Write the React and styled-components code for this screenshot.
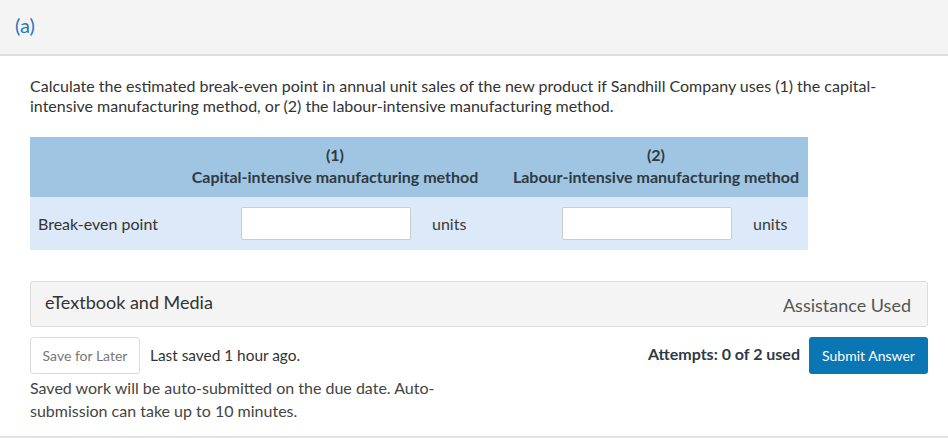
import React from "react";
import styled, { createGlobalStyle } from "styled-components";

const Global = createGlobalStyle`
  html, body { margin: 0; padding: 0; background: #fff; }
  body { font-family: Lato, "Open Sans", Arial, sans-serif; color: #333; }
  * { box-sizing: border-box; }
`;

const Page = styled.div`
  width: 948px;
  height: 438px;
  border-bottom: 2px solid #e2e2e2;
`;

const PartHeader = styled.div`
  height: 56px;
  background: #f4f4f4;
  border-bottom: 2px solid #dedede;
  padding: 13px 15px 0;
  font-size: 20px;
  color: #1f78c1;
`;

const Body = styled.div`
  padding: 20px 20px 0 30px;
`;

const Prompt = styled.p`
  margin: 0;
  font-size: 16px;
  line-height: 19.5px;
  color: #333;
  max-width: 880px;
`;

const Grid = styled.div`
  margin-top: 22px;
  width: 778px;
  display: grid;
  grid-template-columns: 155px 300px 19px 304px;
`;

const HeadCell = styled.div`
  background: #a0c5e2;
  height: 60px;
  padding-top: 7px;
  text-align: center;
  font-weight: 700;
  font-size: 16px;
  line-height: 22px;
  color: #2e3a44;
  white-space: nowrap;
`;

const RowCell = styled.div`
  background: #dce9f9;
  height: 53px;
  display: flex;
  align-items: center;
  gap: 21px;
  padding-left: ${(p) => p.$pad || 0}px;
  font-size: 16px;
  color: #333;
`;

const Input = styled.input`
  width: 170px;
  height: 33px;
  border: 1px solid #cccccc;
  border-radius: 2px;
  background: #fff;
  margin-top: -1px;
`;

const Units = styled.span`
  font-size: 16px;
  color: #3a3a3a;
`;

const MediaPanel = styled.div`
  margin-top: 31px;
  height: 46px;
  border: 1px solid #dcdcdc;
  border-radius: 3px;
  background: #f4f4f4;
  display: flex;
  align-items: center;
  justify-content: space-between;
  padding: 0 16px 0 14px;
`;

const MediaTitle = styled.span`
  font-size: 18px;
  color: #333;
  margin-top: -5px;
`;

const Assist = styled.span`
  font-size: 18px;
  color: #555;
  margin-top: 1px;
`;

const Footer = styled.div`
  margin-top: 10px;
  display: flex;
  justify-content: space-between;
  align-items: flex-start;
`;

const Left = styled.div`
  display: flex;
  flex-direction: column;
`;

const SaveRow = styled.div`
  display: flex;
  align-items: center;
  gap: 10px;
`;

const SaveButton = styled.button`
  width: 110px;
  height: 37px;
  border: 1px solid #dcdcdc;
  border-radius: 3px;
  background: #fff;
  font-family: inherit;
  font-size: 14px;
  color: #777;
  padding: 0;
`;

const Saved = styled.span`
  font-size: 15.4px;
  color: #333;
  margin-top: -2px;
`;

const Note = styled.p`
  margin: 3px 0 0;
  width: 420px;
  font-size: 16px;
  line-height: 22.5px;
  color: #444;
`;

const Right = styled.div`
  display: flex;
  align-items: center;
  gap: 9px;
`;

const Attempts = styled.span`
  font-size: 16px;
  font-weight: 700;
  color: #2e3a44;
  margin-top: -4px;
`;

const SubmitButton = styled.button`
  width: 119px;
  height: 37px;
  border: none;
  border-radius: 3px;
  background: #0a76b3;
  color: #fff;
  font-family: inherit;
  font-size: 14px;
  padding: 0;
`;

export default function App() {
  return (
    <>
      <Global />
      <Page>
        <PartHeader>(a)</PartHeader>
        <Body>
          <Prompt>
            Calculate the estimated break-even point in annual unit sales of the new product if Sandhill
            Company uses (1) the capital-intensive manufacturing method, or (2) the labour-intensive
            manufacturing method.
          </Prompt>
          <Grid>
            <HeadCell />
            <HeadCell>
              (1)
              <br />
              Capital-intensive manufacturing method
            </HeadCell>
            <HeadCell />
            <HeadCell>
              (2)
              <br />
              Labour-intensive manufacturing method
            </HeadCell>
            <RowCell $pad={8}>Break-even point</RowCell>
            <RowCell $pad={56}>
              <Input />
              <Units>units</Units>
            </RowCell>
            <RowCell />
            <RowCell $pad={58}>
              <Input />
              <Units>units</Units>
            </RowCell>
          </Grid>
          <MediaPanel>
            <MediaTitle>eTextbook and Media</MediaTitle>
            <Assist>Assistance Used</Assist>
          </MediaPanel>
          <Footer>
            <Left>
              <SaveRow>
                <SaveButton>Save for Later</SaveButton>
                <Saved>Last saved 1 hour ago.</Saved>
              </SaveRow>
              <Note>
                Saved work will be auto-submitted on the due date. Auto-submission can take up to 10
                minutes.
              </Note>
            </Left>
            <Right>
              <Attempts>Attempts: 0 of 2 used</Attempts>
              <SubmitButton>Submit Answer</SubmitButton>
            </Right>
          </Footer>
        </Body>
      </Page>
    </>
  );
}
